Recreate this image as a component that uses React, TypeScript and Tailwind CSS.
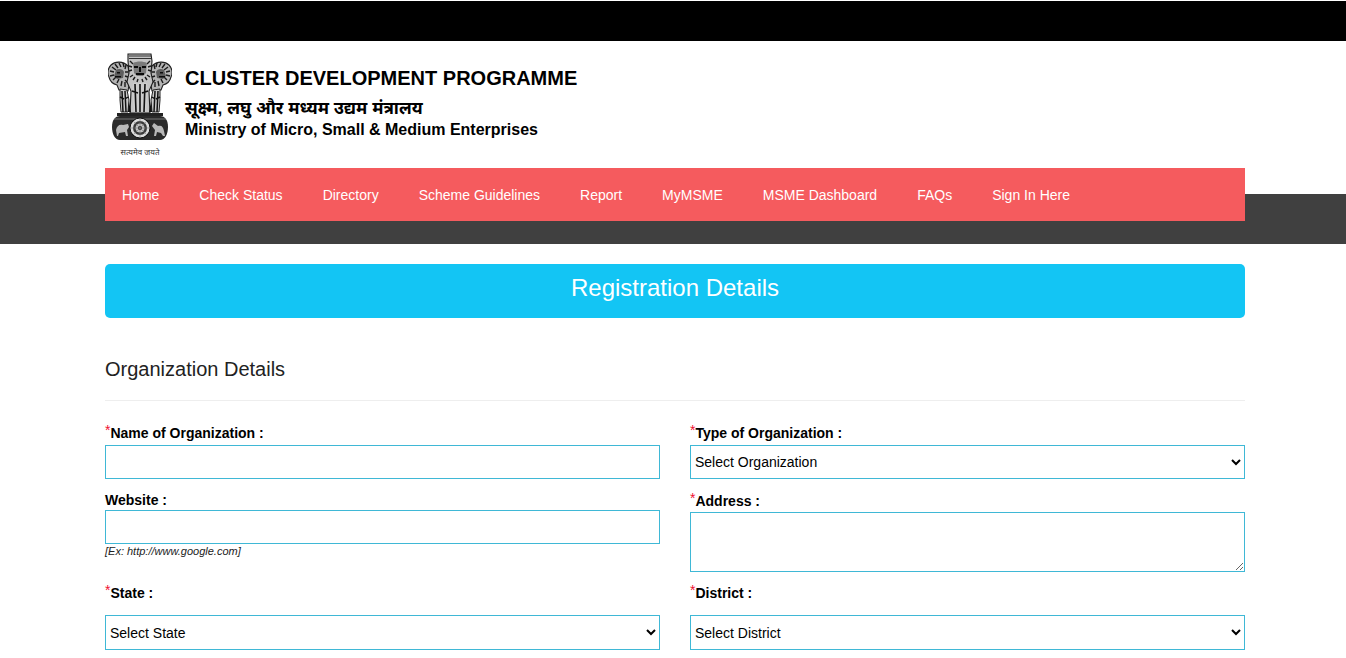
const ff = { fontFamily: '"Liberation Sans", Arial, "Noto Sans", "Noto Sans Devanagari", "Lohit Devanagari", sans-serif' };

function SideLion() {
  return (
    <g>
      {/* mane outline */}
      <path d="M20 13C15 8 7 8 3 12 0 15-1 20 1 24c1 4 4 7 8 8l2 5 9 1 2-12z" fill="#b4b4b4" stroke="#222" strokeWidth="1.1" />
      {/* mane hatch */}
      <path d="M4 14l4 3M7 11l3 4M11 10l2 4M15 10l1 4M18 12l-1 4M2 18l4 1M2 23l4-1M5 27l3-3M9 30l2-4M13 33l1-5M17 34v-5M20 30l-3-3M20 24l-3-1M20 19l-3 0" stroke="#1a1a1a" strokeWidth="1.4" fill="none" />
      {/* face */}
      <path d="M8 17c3-2 7-1 8 2l-1 6-6 1-3-3z" fill="#5e5e5e" />
      <path d="M9 19h3v1.5H9zM7 23h6v1.5H7z" fill="#0c0c0c" />
      {/* body and legs */}
      <path d="M12 36l7 1 2 10-1 12h-7l-1-12z" fill="#c9c9c9" stroke="#222" strokeWidth="1" />
      <path d="M14 38l1 21M17 38l1 21M12 44l4 2M20 44l-3 2" stroke="#111" strokeWidth="1.5" fill="none" />
    </g>
  );
}

function Emblem() {
  return (
    <svg width="64" height="92" viewBox="0 0 64 92" className="block blur-[0.4px]">
      <SideLion />
      <g transform="translate(64 0) scale(-1 1)">
        <SideLion />
      </g>
      {/* central lion */}
      <path d="M20 1h23l1 7-1 12 2 9-4 9 1 22H22l1-22-4-9 2-9-1-12z" fill="#c4c4c4" stroke="#1c1c1c" strokeWidth="1.1" />
      <path d="M21 3h22M21 5.5h22" stroke="#333" strokeWidth="1" />
      <path d="M22 8l3 3M42 8l-3 3M21 13l3 1M43 13l-3 1M21 18l3-1M43 18l-3-1M22 24l3-2M42 24l-3-2M25 27l2-3M39 27l-2-3M29 29l1-3M35 29l-1-3" stroke="#1a1a1a" strokeWidth="1.4" fill="none" />
      <path d="M25 10c4-2 10-2 14 0l-1 10-3 3h-6l-3-3z" fill="#7a7a7a" />
      <path d="M26 13h4v2h-4zM34 13h4v2h-4zM31 14h2v5h-2zM28 20h8v2h-8z" fill="#0a0a0a" />
      <path d="M25 30h14l1 8-2 21h-12l-2-21z" fill="#cdcdcd" />
      <path d="M27 31l1 28M32 31v28M37 31l-1 28M24 38l6 2M40 38l-6 2" stroke="#111" strokeWidth="1.6" fill="none" />
      {/* shadow between legs */}
      <path d="M21 48l2 11h-3zM43 48l-2 11h3z" fill="#111" />
      {/* abacus */}
      <path d="M9 60h46v3H9z" fill="#222" />
      <path d="M12 63C7 63 4 67 4 74s3 13 8 13h40c5 0 8-6 8-13s-3-11-8-11z" fill="#2a2a2a" />
      <path d="M6 66h52" stroke="#888" strokeWidth="0.8" />
      {/* bull */}
      <path d="M8 77c1-4 3-6 7-5l5-1 1 3-2 3 1 6h-2l-1-4-6 1-1 3H9z" fill="#b8b8b8" />
      {/* horse */}
      <path d="M56 78c-1-4-2-6-6-5l-4-3-2 3 3 4-1 6h2l1-4 4 1 2 3h2z" fill="#b8b8b8" />
      {/* wheel */}
      <circle cx="32" cy="75" r="10" fill="#dcdcdc" stroke="#111" strokeWidth="1" />
      <circle cx="32" cy="75" r="7" fill="#3a3a3a" />
      <circle cx="32" cy="75" r="4.5" fill="#c4c4c4" />
      <circle cx="32" cy="75" r="2" fill="#1a1a1a" />
      <path d="M32 65v20M22 75h20M25 68l14 14M39 68L25 82" stroke="#777" strokeWidth="0.6" />
    </svg>
  );
}

function Label({ text, req, className = "" }: { text: string; req?: boolean; className?: string }) {
  return (
    <label className={`block text-sm leading-5 font-bold text-black ${className}`}>
      {req && <span className="relative -top-[3px] font-normal text-[#f0102f]">*</span>}
      {text}
    </label>
  );
}

const ctl = "block w-full border border-[#3fb8d6] bg-white text-sm text-black outline-none";

const nav = ["Home", "Check Status", "Directory", "Scheme Guidelines", "Report", "MyMSME", "MSME Dashboard", "FAQs", "Sign In Here"];

export default function App() {
  return (
    <div style={ff} className="h-[658px] overflow-hidden bg-white">
      <div className="mt-px h-10 bg-black" />
      <div className="ml-[105px] flex h-[153px] w-[1140px]">
        <div className="flex w-[80px] flex-col pt-[12px] pl-[3px]">
          <Emblem />
          <div className="mt-[3px] w-[64px] text-center text-[8px] leading-[10px] text-[#333]">सत्यमेव जयते</div>
        </div>
        <div className="pt-[24px]">
          <div className="text-xl leading-[26px] font-bold text-black">CLUSTER DEVELOPMENT PROGRAMME</div>
          <div className="mt-[7px] text-[17.3px] leading-[20px] font-bold text-black">सूक्ष्म, लघु और मध्यम उद्यम मंत्रालय</div>
          <div className="mt-[2px] text-base leading-[20px] font-bold text-black">Ministry of Micro, Small &amp; Medium Enterprises</div>
        </div>
      </div>
      <div className="h-[50px] bg-[#404040]">
        <nav className="relative ml-[105px] flex h-[53px] w-[1140px] -translate-y-[26px] items-center gap-10 bg-[#f55b5e] px-[17px] text-sm text-white">
          {nav.map((n) => (
            <span key={n}>{n}</span>
          ))}
        </nav>
      </div>
      <main className="ml-[105px] w-[1140px]">
        <div className="mt-5 h-[54px] rounded-[5px] bg-[#13c5f4] pt-[7px] text-center text-2xl leading-[34px] text-white">
          Registration Details
        </div>
        <h2 className="mt-[39px] text-xl leading-6 text-[#222]">Organization Details</h2>
        <hr className="mt-[19px] border-t border-[#eeeeee]" />
        <div className="mt-[22px] grid grid-cols-2 gap-x-[30px]">
          <div>
            <Label text="Name of Organization :" req className="mb-[2px]" />
            <input className={`${ctl} h-[34px] px-1`} />
            <Label text="Website :" className="mt-[11px]" />
            <input className={`${ctl} h-[34px] px-1`} />
            <div className="text-[11px] leading-[14px] text-[#222] italic">[Ex: http://www.google.com]</div>
          </div>
          <div>
            <Label text="Type of Organization :" req className="mb-[2px]" />
            <select defaultValue="a" className={`${ctl} h-[34px]`}>
              <option value="a">Select Organization</option>
            </select>
            <Label text="Address :" req className="mt-[12px]" />
            <textarea className={`${ctl} mt-[1px] h-[60px]`} />
          </div>
          <div className="mt-[11px]">
            <Label text="State :" req />
            <select defaultValue="a" className={`${ctl} mt-[12px] h-[35px]`}>
              <option value="a">Select State</option>
            </select>
          </div>
          <div className="mt-[11px]">
            <Label text="District :" req />
            <select defaultValue="a" className={`${ctl} mt-[12px] h-[35px]`}>
              <option value="a">Select District</option>
            </select>
          </div>
        </div>
      </main>
    </div>
  );
}
